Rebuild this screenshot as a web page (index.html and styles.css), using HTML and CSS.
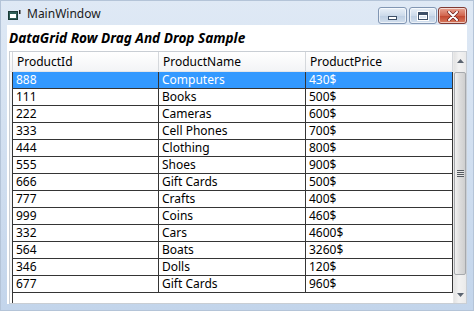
FILE: index.html
```html
<!DOCTYPE html>
<html lang="en">
<head>
    <meta charset="UTF-8">
    <title>MainWindow</title>
    <link rel="stylesheet" href="styles.css">
</head>
<body>
    <div class="window">
        <div class="titlebar">
            <svg class="app-icon" width="13" height="11" viewBox="0 0 13 11">
                <rect x="0.5" y="2.5" width="9" height="8" fill="#2f5d57" stroke="#1d3b38"/>
                <rect x="2" y="5" width="6" height="4" fill="#ffffff"/>
                <rect x="11" y="1" width="1.5" height="4" fill="#222"/>
            </svg>
            <span class="title">MainWindow</span>
            <div class="caption-buttons">
                <div class="cap min"><span class="min-glyph"></span></div>
                <div class="cap max"><span class="max-glyph"></span></div>
                <div class="cap close">
                    <svg width="12" height="10" viewBox="0 0 12 10">
                        <path d="M2 1 L10 9 M10 1 L2 9" stroke="#6b1f1a" stroke-width="3.4" stroke-linecap="round"/>
                        <path d="M2 1 L10 9 M10 1 L2 9" stroke="#ffffff" stroke-width="2" stroke-linecap="round"/>
                    </svg>
                </div>
            </div>
        </div>

        <div class="client">
            <h1 class="heading">DataGrid Row Drag And Drop Sample</h1>
            <div class="datagrid">
                <div class="grid-body">
                    <div class="grid-header">
                        <div class="hcell">ProductId</div>
                        <div class="hcell">ProductName</div>
                        <div class="hcell">ProductPrice</div>
                    </div>
                    <div class="row selected"><div class="cell">888</div><div class="cell">Computers</div><div class="cell">430$</div></div>
                    <div class="row"><div class="cell">111</div><div class="cell">Books</div><div class="cell">500$</div></div>
                    <div class="row"><div class="cell">222</div><div class="cell">Cameras</div><div class="cell">600$</div></div>
                    <div class="row"><div class="cell">333</div><div class="cell">Cell Phones</div><div class="cell">700$</div></div>
                    <div class="row"><div class="cell">444</div><div class="cell">Clothing</div><div class="cell">800$</div></div>
                    <div class="row"><div class="cell">555</div><div class="cell">Shoes</div><div class="cell">900$</div></div>
                    <div class="row"><div class="cell">666</div><div class="cell">Gift Cards</div><div class="cell">500$</div></div>
                    <div class="row"><div class="cell">777</div><div class="cell">Crafts</div><div class="cell">400$</div></div>
                    <div class="row"><div class="cell">999</div><div class="cell">Coins</div><div class="cell">460$</div></div>
                    <div class="row"><div class="cell">332</div><div class="cell">Cars</div><div class="cell">4600$</div></div>
                    <div class="row"><div class="cell">564</div><div class="cell">Boats</div><div class="cell">3260$</div></div>
                    <div class="row"><div class="cell">346</div><div class="cell">Dolls</div><div class="cell">120$</div></div>
                    <div class="row"><div class="cell">677</div><div class="cell">Gift Cards</div><div class="cell">960$</div></div>
                    <div class="new-row"></div>
                </div>
                <div class="scrollbar">
                    <div class="sb-btn">
                        <svg width="7" height="4" viewBox="0 0 7 4"><path d="M0 4 L3.5 0 L7 4 Z" fill="#5b6470"/></svg>
                    </div>
                    <div class="sb-track">
                        <div class="sb-thumb"><span class="grip"></span></div>
                    </div>
                    <div class="sb-btn">
                        <svg width="7" height="4" viewBox="0 0 7 4"><path d="M0 0 L3.5 4 L7 0 Z" fill="#5b6470"/></svg>
                    </div>
                </div>
            </div>
        </div>
    </div>
</body>
</html>
```

FILE: styles.css
```css
:root {
    --frame-top: #dfe9f5;
    --frame-bottom: #c3d5eb;
    --grid-line: #353535;
    --header-line: #d5d8dc;
    --selected: #3399ff;
    --ui-font: 'Noto Sans', 'Open Sans', sans-serif;
}

* {
    box-sizing: border-box;
    margin: 0;
    padding: 0;
}

html, body {
    width: 474px;
    height: 311px;
    overflow: hidden;
    font-family: var(--ui-font);
    color: #000;
}

.window {
    display: flex;
    flex-direction: column;
    height: 311px;
    background: linear-gradient(to bottom, var(--frame-top), var(--frame-bottom));
    border: 1px solid #b4c4d8;
}

/* title bar */
.titlebar {
    display: flex;
    align-items: flex-start;
    height: 24px;
}

.app-icon {
    margin: 8px 0 0 7px;
}

.title {
    margin: 5px 0 0 6px;
    font-size: 12px;
    line-height: 16px;
    color: #1b1b1b;
}

.caption-buttons {
    display: flex;
    gap: 1px;
    margin: 6px 6px 0 auto;
}

.cap {
    display: flex;
    align-items: center;
    justify-content: center;
    height: 17px;
    border: 1px solid #8196b3;
    border-radius: 3px;
    background: linear-gradient(to bottom, #e9f0f8, #cddbeb 50%, #bccde2 51%, #d3e0ee);
    box-shadow: inset 0 0 0 1px rgba(255, 255, 255, 0.6);
}

.cap.min { width: 29px; margin-right: 1px; }
.cap.max { width: 28px; }

.cap.close {
    width: 29px;
    border-color: #7f3a34;
    background: linear-gradient(to bottom, #e8a493, #d2664f 50%, #c1432c 51%, #d87a5e);
}

.min-glyph {
    width: 9px;
    height: 4px;
    margin-top: 4px;
    background: #fff;
    border: 1px solid #3d4f67;
}

.max-glyph {
    width: 10px;
    height: 8px;
    border: 1px solid #3d4f67;
    border-top-width: 3px;
    box-shadow: inset 0 0 0 1px #fff, 0 0 0 1px #fff;
    background: #dde6f1;
}

/* client area */
.client {
    flex: 1;
    display: flex;
    flex-direction: column;
    margin: 0 6px 6px;
    background: #fff;
}

.heading {
    height: 26px;
    padding-left: 2px;
    font-size: 13.6px;
    line-height: 26px;
    font-weight: 700;
    font-style: italic;
}

.datagrid {
    flex: 1;
    display: flex;
    margin-left: 2px;
    border: 1px solid #c9ced4;
    overflow: hidden;
}

.grid-body {
    flex: 1;
    display: flex;
    flex-direction: column;
}

.grid-header {
    display: grid;
    grid-template-columns: 3px 146px 147px 147px;
    height: 20px;
    background: linear-gradient(to bottom, #ffffff, #f3f4f6);
    border-bottom: 1px solid #e4e6e9;
}

.grid-header::before {
    content: '';
    border-right: 1px solid var(--header-line);
}

.hcell {
    padding-left: 4px;
    font-size: 12px;
    line-height: 19px;
    border-right: 1px solid var(--header-line);
}

.row {
    display: grid;
    grid-template-columns: 3px 146px 147px 147px;
    height: 17px;
}

.row::before {
    content: '';
    background: #f4f6f8;
    border-right: 1px solid var(--grid-line);
}

.cell {
    padding-left: 3px;
    font-size: 12px;
    line-height: 16px;
    border-right: 1px solid var(--grid-line);
    border-bottom: 1px solid var(--grid-line);
}

.row.selected .cell {
    background: var(--selected);
    color: #fff;
}

.new-row {
    flex: 1;
    margin-left: 2px;
    border-left: 1px solid var(--grid-line);
}

/* vertical scrollbar */
.scrollbar {
    display: flex;
    flex-direction: column;
    width: 13px;
    background: linear-gradient(to right, #e3e3e3, #f2f2f2 40%, #eaeaea);
    border-left: 1px solid #e9e9e9;
}

.sb-btn {
    display: flex;
    align-items: center;
    justify-content: center;
    height: 17px;
}

.sb-track {
    flex: 1;
    padding: 3px 0 11px;
}

.sb-thumb {
    display: flex;
    align-items: center;
    justify-content: center;
    height: 100%;
    border: 1px solid #a6a9ad;
    border-radius: 2px;
    background: linear-gradient(to right, #f1f1f1, #dcdcdc 50%, #cfcfcf);
}

.grip {
    width: 7px;
    height: 7px;
    background: repeating-linear-gradient(to bottom, #555a60 0 1px, #e6e6e6 1px 2px);
}
```
